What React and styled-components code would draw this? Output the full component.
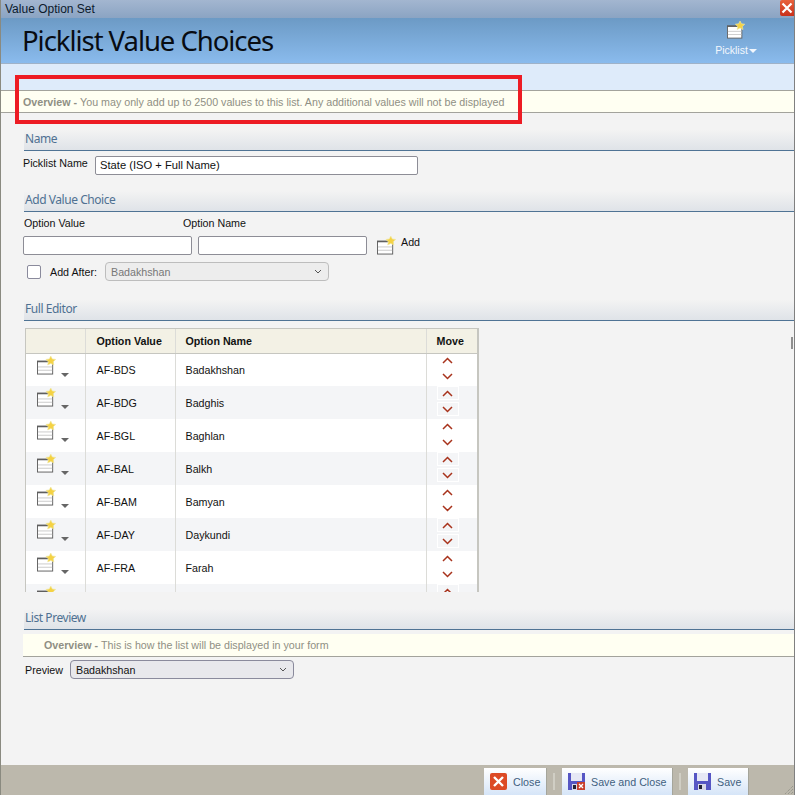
import React from "react";
import styled, { createGlobalStyle } from "styled-components";

const Global = createGlobalStyle`
  html, body { margin: 0; padding: 0; background: #f3f3f3; }
  * { box-sizing: border-box; }
`;

const Win = styled.div`
  position: relative;
  width: 795px; height: 795px; overflow: hidden;
  display: flex; flex-direction: column;
  background: #f3f3f3;
  border-left: 1px solid #8a8a80;
  border-right: 1px solid #808080;
  font-family: "Liberation Sans", Arial, sans-serif;
  font-size: 10.7px; color: #111;
`;
const TitleBar = styled.div`
  height: 18px; flex: none; display: flex; align-items: center; justify-content: space-between;
  padding-left: 4px; font-size: 12px; color: #0c1a2c;
  background: linear-gradient(#a3b6d0, #8ba4c3);
`;
const CloseX = styled.div`
  width: 14px; height: 16px; align-self: flex-start; display: flex; align-items: center; justify-content: center;
  background: linear-gradient(#e8623c, #c9301a); border-radius: 2px 0 0 2px;
`;
const Header = styled.div`
  height: 46px; flex: none; display: flex; justify-content: space-between;
  padding-left: 21px;
  background: linear-gradient(#6c9ac5, #8abbed);
  border-bottom: 1px solid #9fb2c8;
`;
const Title = styled.h1`
  margin: 5px 0 0; font: 400 27.5px/36px "Noto Sans", Tahoma, sans-serif; color: #080c12; letter-spacing: -1.05px;
`;
const PickMenu = styled.div`
  width: 44px; margin-right: 36px; display: flex; flex-direction: column; align-items: center;
  padding-top: 3px; color: #f2f7fd; font: 10.5px/14px "Liberation Sans", sans-serif; gap: 4px;
`;
const PickLabel = styled.span` white-space: nowrap; `;
const Caret = styled.span`
  display: inline-block; width: 0; height: 0; margin-left: 1px; vertical-align: 1px;
  border: 4px solid transparent; border-bottom: 0; border-top-color: ${p => p.$c || "#f2f7fd"};
`;
const RowCaret = styled(Caret)` margin: 0 0 -2px; `;
const Band = styled.div`
  height: 26px; flex: none; background: #deebfa;
`;
const Overview = styled.div`
  flex: none; display: flex; align-items: center; white-space: pre;
  height: 23px; margin-left: ${p => p.$ml || 0}px; margin-top: ${p => p.$mt || 0}px; padding-left: ${p => p.$pl}px;
  background: #fffff2; color: #8f8f84;
  border-top: ${p => p.$top ? "1px solid #a3a39c" : "0"};
  border-bottom: 1px solid #a3a39c;
`;
const Strong = styled.b` margin-right: 3px; `;
const Heading = styled.div`
  height: 21px; flex: none; margin-left: 23px; margin-top: ${p => p.$mt}px; padding: 0 0 0 1px;
  font: 12px/17px "Noto Sans", Tahoma, sans-serif; letter-spacing: -0.45px; color: #4f7192;
  background: linear-gradient(#f3f3f3, #dfe3e8);
  border-bottom: 1px solid #4f7394;
`;
const Row = styled.div`
  display: flex; align-items: center;
  flex: none; height: ${p => p.$h}px; margin-top: ${p => p.$mt || 0}px; margin-left: ${p => p.$ml}px; gap: ${p => p.$gap || 0}px;
`;
const TextInput = styled.div`
  width: ${p => p.$w}px; height: 19px; background: #fff;
  border: 1px solid #8d8d96; border-radius: 2px;
  font-size: 11.2px; line-height: 17px; padding-left: 4px; color: #111;
`;
const Label = styled.span`
  width: ${p => p.$w ? p.$w + "px" : "auto"}; margin-top: ${p => p.$mt || 0}px; margin-left: ${p => p.$ml || 0}px;
`;
const Check = styled.div`
  width: 14px; height: 14px; background: #fff; border: 1px solid #8a8a9c; border-radius: 2px;
`;
const Select = styled.div`
  width: 224px; height: 19px; padding: 0 6px 0 5px; display: flex; align-items: center; justify-content: space-between;
  border-radius: 4px;
  border: 1px solid ${p => p.$off ? "#bdbdbd" : "#8a8a9c"};
  background: ${p => p.$off ? "#ededed" : "#e8e8ec"};
  color: ${p => p.$off ? "#777" : "#111"};
`;
const TableWrap = styled.div`
  flex: none; height: 264px; width: 454px; margin: 7px 0 0 24px; overflow: hidden;
  border: solid #c6c6c0; border-width: 1px 2px 0 1px;
`;
const Table = styled.table`
  border-collapse: collapse; table-layout: fixed; width: 452px; background: #fff;
`;
const Th = styled.th`
  height: 24px; padding: 0 0 0 ${p => p.$pl}px; text-align: left;
  background: #f3f1e5; font-weight: 700; color: #111;
  border-right: 1px solid #dcdcd8; border-bottom: 1px solid #c6c6c0;
  &:last-child { border-right: 0; }
`;
const Tr = styled.tr` background: ${p => p.$alt ? "#f4f5f7" : "#fff"}; `;
const Td = styled.td`
  height: 33px; padding: 0 0 0 ${p => p.$pl}px; border-right: 1px solid #dcdcd8;
  &:last-child { border-right: 0; }
`;
const TopTd = styled(Td)`
  vertical-align: top; padding-top: ${p => p.$pt || 0}px;
`;
const IconCell = styled.div`
  display: flex; align-items: flex-end; gap: 5px;
`;
const MoveCell = styled.div`
  display: flex; flex-direction: column; gap: 2px;
`;
const MoveBtn = styled.div`
  width: 22px; height: 14px; border: 1px solid #fff;
  display: flex; align-items: center; justify-content: center;
`;
const Footer = styled.div`
  margin-top: auto; height: 30px; flex: none; background: #bcb8ac;
  display: flex; align-items: flex-end; padding-right: 46px; justify-content: flex-end; gap: 7px;
`;
const Btn = styled.div`
  height: 27px; width: ${p => p.$w}px; display: flex; align-items: center; gap: 6px; padding-left: 6px;
  background: linear-gradient(#ffffff, #d6e5f8);
  color: #3f5f80;
  box-shadow: 1px 0 0 #a5a59b;
`;
const Sep = styled.div`
  width: 2px; height: 17px; margin: 0 0 5px; background: #d0cec4;
`;
const Grip = styled.svg`
  position: absolute; right: 0; bottom: 0;
`;
const Annotation = styled.div`
  position: absolute; left: 14px; top: 75px; width: 507px; height: 49px;
  border: 4px solid #ed1c24; pointer-events: none;
`;
const Thumb = styled.div`
  position: absolute; left: 790px; top: 337px; width: 2px; height: 12px; background: #8f8f8f;
`;

const Note = ({ s = 20 }) => (
  <svg width={s} height={s} viewBox="0 0 20 20">
    <rect x="0.5" y="5.5" width="16" height="13.5" fill="#fff" stroke="#5f5f5f" />
    <rect x="0" y="5" width="12" height="1.6" fill="#5f5f5f" />
    <path d="M1 11.5h15M1 15h15" stroke="#c9c9c9" />
    <path d="M14.5 0l1.6 3.1 3.6.5-2.6 2.4.6 3.5-3.2-1.7-3.2 1.7.6-3.5-2.6-2.4 3.6-.5z" fill="#f5d244" stroke="#efe9a6" strokeWidth=".7" />
  </svg>
);
const Chevron = ({ up }) => (
  <svg width="11" height="7" viewBox="0 0 11 7">
    <path d={up ? "M1 6l4.5-4.5L10 6" : "M1 1l4.5 4.5L10 1"} fill="none" stroke="#a8331c" strokeWidth="1.5" />
  </svg>
);
const SmallChevron = () => (
  <svg width="8" height="5" viewBox="0 0 8 5"><path d="M1 1l3 3 3-3" fill="none" stroke="#555" strokeWidth="1" /></svg>
);
const CloseIcon = () => (
  <svg width="17" height="17" viewBox="0 0 17 17">
    <rect width="17" height="17" rx="2" fill="#dc4a25" />
    <path d="M4 4l9 9M13 4l-9 9" stroke="#fff" strokeWidth="2.4" />
  </svg>
);
const DiskIcon = ({ x }) => (
  <svg width="17" height="17" viewBox="0 0 17 17">
    <rect width="17" height="17" fill="#5656c4" />
    <rect x="3" y="0" width="11" height="8" fill="#e6e8f5" />
    <rect x="4" y="11" width="8" height="6" fill="#d8d8e8" />
    <rect x="5" y="12" width="3" height="4" fill="#223" />
    {x && <rect x="9" y="9" width="8" height="8" fill="#c8402e" />}
    {x && <path d="M11 11l4 4M15 11l-4 4" stroke="#fff" strokeWidth="1.3" />}
  </svg>
);

const rows = [
  ["AF-BDS", "Badakhshan"], ["AF-BDG", "Badghis"], ["AF-BGL", "Baghlan"], ["AF-BAL", "Balkh"],
  ["AF-BAM", "Bamyan"], ["AF-DAY", "Daykundi"], ["AF-FRA", "Farah"], ["", ""],
];

export default function App() {
  return (
    <Win>
      <Global />
      <TitleBar>
        Value Option Set
        <CloseX>
          <svg width="12" height="12" viewBox="0 0 12 12"><path d="M1.5 1.5l9 9M10.5 1.5l-9 9" stroke="#fff" strokeWidth="2.2" /></svg>
        </CloseX>
      </TitleBar>
      <Header>
        <Title>Picklist Value Choices</Title>
        <PickMenu>
          <Note s={18} />
          <PickLabel>Picklist<Caret /></PickLabel>
        </PickMenu>
      </Header>
      <Band />
      <Overview $pl={22} $top><Strong>Overview -</Strong>You may only add up to 2500 values to this list. Any additional values will not be displayed</Overview>

      <Heading $mt={17}>Name</Heading>
      <Row $h={19} $mt={5} $ml={22}>
        <Label $w={72} $mt={-5}>Picklist Name</Label>
        <TextInput $w={323}>State (ISO + Full Name)</TextInput>
      </Row>

      <Heading $mt={16}>Add Value Choice</Heading>
      <Row $h={14} $mt={4} $ml={23}>
        <Label $w={159}>Option Value</Label>
        <Label>Option Name</Label>
      </Row>
      <Row $h={19} $mt={6} $ml={22} $gap={6}>
        <TextInput $w={169} />
        <TextInput $w={169} />
        <Row $h={19} $ml={4} $gap={5}>
          <Note s={19} />
          <Label $mt={-8}>Add</Label>
        </Row>
      </Row>
      <Row $h={19} $mt={7} $ml={26}>
        <Check />
        <Label $w={55} $ml={9}>Add After:</Label>
        <Select $off>Badakhshan<SmallChevron /></Select>
      </Row>

      <Heading $mt={19}>Full Editor</Heading>
      <TableWrap>
        <Table>
          <colgroup><col width="59" /><col width="90" /><col width="251" /><col width="52" /></colgroup>
          <thead>
            <tr><Th $pl={0} /><Th $pl={11}>Option Value</Th><Th $pl={10}>Option Name</Th><Th $pl={10}>Move</Th></tr>
          </thead>
          <tbody>
            {rows.map(([v, n], i) => (
              <Tr key={i} $alt={i % 2 === 1}>
                <TopTd $pl={11} $pt={2}>
                  <IconCell><Note s={19} /><RowCaret $c="#666" /></IconCell>
                </TopTd>
                <Td $pl={11}>{v}</Td>
                <Td $pl={10}>{n}</Td>
                <TopTd $pl={10}>
                  <MoveCell>
                    <MoveBtn><Chevron up /></MoveBtn>
                    <MoveBtn><Chevron /></MoveBtn>
                  </MoveCell>
                </TopTd>
              </Tr>
            ))}
          </tbody>
        </Table>
      </TableWrap>

      <Heading $mt={17}>List Preview</Heading>
      <Overview $pl={21} $ml={22} $mt={4}><Strong>Overview -</Strong>This is how the list will be displayed in your form</Overview>
      <Row $h={19} $mt={3} $ml={24}>
        <Label $w={45}>Preview</Label>
        <Select>Badakhshan<SmallChevron /></Select>
      </Row>

      <Footer>
        <Btn $w={62}><CloseIcon />Close</Btn>
        <Sep />
        <Btn $w={110}><DiskIcon x />Save and Close</Btn>
        <Sep />
        <Btn $w={60}><DiskIcon />Save</Btn>
      </Footer>
      <Grip width="12" height="12" viewBox="0 0 12 12">
        <path d="M11 3L3 11M11 6L6 11M11 9L9 11" stroke="#8a8a80" strokeDasharray="1 1" />
      </Grip>
      <Annotation />
      <Thumb />
    </Win>
  );
}
